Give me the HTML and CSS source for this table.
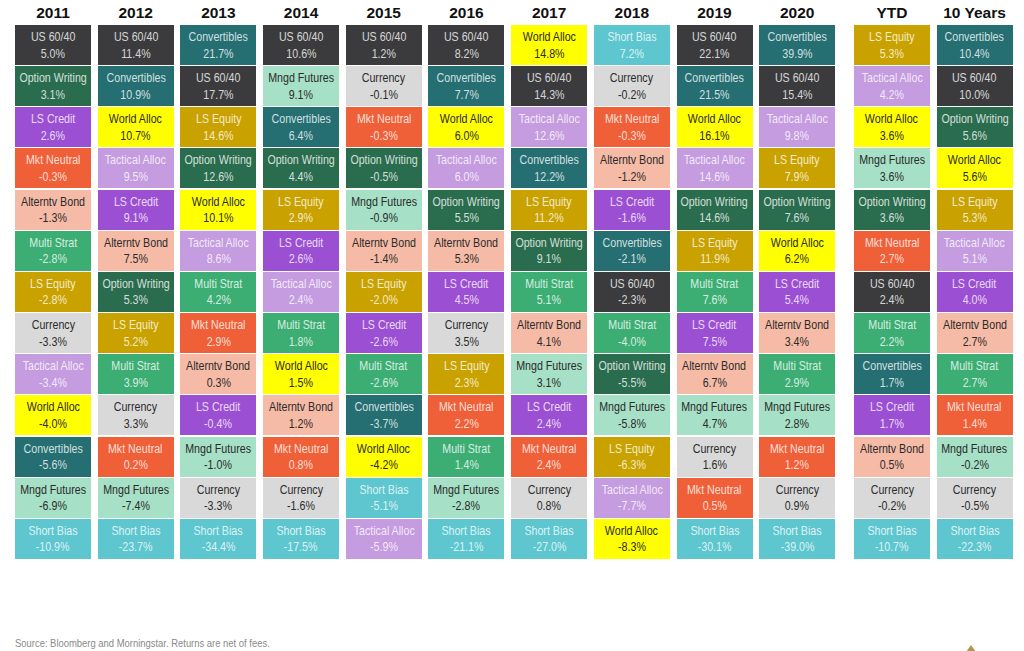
FILE: index.html
```html
<!DOCTYPE html>
<html lang="en">
<head>
<meta charset="utf-8">
<title>Asset class returns</title>
<link rel="stylesheet" href="styles.css">
</head>
<body>
<div class="page">
  <div class="chart">
    <div class="group">
      <div class="col">
        <div class="year">2011</div>
        <div class="cell c-us"><span>US 60/40</span><span>5.0%</span></div>
        <div class="cell c-ow"><span>Option Writing</span><span>3.1%</span></div>
        <div class="cell c-lsc"><span>LS Credit</span><span>2.6%</span></div>
        <div class="cell c-mn"><span>Mkt Neutral</span><span>-0.3%</span></div>
        <div class="cell c-ab"><span>Alterntv Bond</span><span>-1.3%</span></div>
        <div class="cell c-ms"><span>Multi Strat</span><span>-2.8%</span></div>
        <div class="cell c-lse"><span>LS Equity</span><span>-2.8%</span></div>
        <div class="cell c-cur"><span>Currency</span><span>-3.3%</span></div>
        <div class="cell c-ta"><span>Tactical Alloc</span><span>-3.4%</span></div>
        <div class="cell c-wa"><span>World Alloc</span><span>-4.0%</span></div>
        <div class="cell c-cv"><span>Convertibles</span><span>-5.6%</span></div>
        <div class="cell c-mf"><span>Mngd Futures</span><span>-6.9%</span></div>
        <div class="cell c-sb"><span>Short Bias</span><span>-10.9%</span></div>
      </div>
      <div class="col">
        <div class="year">2012</div>
        <div class="cell c-us"><span>US 60/40</span><span>11.4%</span></div>
        <div class="cell c-cv"><span>Convertibles</span><span>10.9%</span></div>
        <div class="cell c-wa"><span>World Alloc</span><span>10.7%</span></div>
        <div class="cell c-ta"><span>Tactical Alloc</span><span>9.5%</span></div>
        <div class="cell c-lsc"><span>LS Credit</span><span>9.1%</span></div>
        <div class="cell c-ab"><span>Alterntv Bond</span><span>7.5%</span></div>
        <div class="cell c-ow"><span>Option Writing</span><span>5.3%</span></div>
        <div class="cell c-lse"><span>LS Equity</span><span>5.2%</span></div>
        <div class="cell c-ms"><span>Multi Strat</span><span>3.9%</span></div>
        <div class="cell c-cur"><span>Currency</span><span>3.3%</span></div>
        <div class="cell c-mn"><span>Mkt Neutral</span><span>0.2%</span></div>
        <div class="cell c-mf"><span>Mngd Futures</span><span>-7.4%</span></div>
        <div class="cell c-sb"><span>Short Bias</span><span>-23.7%</span></div>
      </div>
      <div class="col">
        <div class="year">2013</div>
        <div class="cell c-cv"><span>Convertibles</span><span>21.7%</span></div>
        <div class="cell c-us"><span>US 60/40</span><span>17.7%</span></div>
        <div class="cell c-lse"><span>LS Equity</span><span>14.6%</span></div>
        <div class="cell c-ow"><span>Option Writing</span><span>12.6%</span></div>
        <div class="cell c-wa"><span>World Alloc</span><span>10.1%</span></div>
        <div class="cell c-ta"><span>Tactical Alloc</span><span>8.6%</span></div>
        <div class="cell c-ms"><span>Multi Strat</span><span>4.2%</span></div>
        <div class="cell c-mn"><span>Mkt Neutral</span><span>2.9%</span></div>
        <div class="cell c-ab"><span>Alterntv Bond</span><span>0.3%</span></div>
        <div class="cell c-lsc"><span>LS Credit</span><span>-0.4%</span></div>
        <div class="cell c-mf"><span>Mngd Futures</span><span>-1.0%</span></div>
        <div class="cell c-cur"><span>Currency</span><span>-3.3%</span></div>
        <div class="cell c-sb"><span>Short Bias</span><span>-34.4%</span></div>
      </div>
      <div class="col">
        <div class="year">2014</div>
        <div class="cell c-us"><span>US 60/40</span><span>10.6%</span></div>
        <div class="cell c-mf"><span>Mngd Futures</span><span>9.1%</span></div>
        <div class="cell c-cv"><span>Convertibles</span><span>6.4%</span></div>
        <div class="cell c-ow"><span>Option Writing</span><span>4.4%</span></div>
        <div class="cell c-lse"><span>LS Equity</span><span>2.9%</span></div>
        <div class="cell c-lsc"><span>LS Credit</span><span>2.6%</span></div>
        <div class="cell c-ta"><span>Tactical Alloc</span><span>2.4%</span></div>
        <div class="cell c-ms"><span>Multi Strat</span><span>1.8%</span></div>
        <div class="cell c-wa"><span>World Alloc</span><span>1.5%</span></div>
        <div class="cell c-ab"><span>Alterntv Bond</span><span>1.2%</span></div>
        <div class="cell c-mn"><span>Mkt Neutral</span><span>0.8%</span></div>
        <div class="cell c-cur"><span>Currency</span><span>-1.6%</span></div>
        <div class="cell c-sb"><span>Short Bias</span><span>-17.5%</span></div>
      </div>
      <div class="col">
        <div class="year">2015</div>
        <div class="cell c-us"><span>US 60/40</span><span>1.2%</span></div>
        <div class="cell c-cur"><span>Currency</span><span>-0.1%</span></div>
        <div class="cell c-mn"><span>Mkt Neutral</span><span>-0.3%</span></div>
        <div class="cell c-ow"><span>Option Writing</span><span>-0.5%</span></div>
        <div class="cell c-mf"><span>Mngd Futures</span><span>-0.9%</span></div>
        <div class="cell c-ab"><span>Alterntv Bond</span><span>-1.4%</span></div>
        <div class="cell c-lse"><span>LS Equity</span><span>-2.0%</span></div>
        <div class="cell c-lsc"><span>LS Credit</span><span>-2.6%</span></div>
        <div class="cell c-ms"><span>Multi Strat</span><span>-2.6%</span></div>
        <div class="cell c-cv"><span>Convertibles</span><span>-3.7%</span></div>
        <div class="cell c-wa"><span>World Alloc</span><span>-4.2%</span></div>
        <div class="cell c-sb"><span>Short Bias</span><span>-5.1%</span></div>
        <div class="cell c-ta"><span>Tactical Alloc</span><span>-5.9%</span></div>
      </div>
      <div class="col">
        <div class="year">2016</div>
        <div class="cell c-us"><span>US 60/40</span><span>8.2%</span></div>
        <div class="cell c-cv"><span>Convertibles</span><span>7.7%</span></div>
        <div class="cell c-wa"><span>World Alloc</span><span>6.0%</span></div>
        <div class="cell c-ta"><span>Tactical Alloc</span><span>6.0%</span></div>
        <div class="cell c-ow"><span>Option Writing</span><span>5.5%</span></div>
        <div class="cell c-ab"><span>Alterntv Bond</span><span>5.3%</span></div>
        <div class="cell c-lsc"><span>LS Credit</span><span>4.5%</span></div>
        <div class="cell c-cur"><span>Currency</span><span>3.5%</span></div>
        <div class="cell c-lse"><span>LS Equity</span><span>2.3%</span></div>
        <div class="cell c-mn"><span>Mkt Neutral</span><span>2.2%</span></div>
        <div class="cell c-ms"><span>Multi Strat</span><span>1.4%</span></div>
        <div class="cell c-mf"><span>Mngd Futures</span><span>-2.8%</span></div>
        <div class="cell c-sb"><span>Short Bias</span><span>-21.1%</span></div>
      </div>
      <div class="col">
        <div class="year">2017</div>
        <div class="cell c-wa"><span>World Alloc</span><span>14.8%</span></div>
        <div class="cell c-us"><span>US 60/40</span><span>14.3%</span></div>
        <div class="cell c-ta"><span>Tactical Alloc</span><span>12.6%</span></div>
        <div class="cell c-cv"><span>Convertibles</span><span>12.2%</span></div>
        <div class="cell c-lse"><span>LS Equity</span><span>11.2%</span></div>
        <div class="cell c-ow"><span>Option Writing</span><span>9.1%</span></div>
        <div class="cell c-ms"><span>Multi Strat</span><span>5.1%</span></div>
        <div class="cell c-ab"><span>Alterntv Bond</span><span>4.1%</span></div>
        <div class="cell c-mf"><span>Mngd Futures</span><span>3.1%</span></div>
        <div class="cell c-lsc"><span>LS Credit</span><span>2.4%</span></div>
        <div class="cell c-mn"><span>Mkt Neutral</span><span>2.4%</span></div>
        <div class="cell c-cur"><span>Currency</span><span>0.8%</span></div>
        <div class="cell c-sb"><span>Short Bias</span><span>-27.0%</span></div>
      </div>
      <div class="col">
        <div class="year">2018</div>
        <div class="cell c-sb"><span>Short Bias</span><span>7.2%</span></div>
        <div class="cell c-cur"><span>Currency</span><span>-0.2%</span></div>
        <div class="cell c-mn"><span>Mkt Neutral</span><span>-0.3%</span></div>
        <div class="cell c-ab"><span>Alterntv Bond</span><span>-1.2%</span></div>
        <div class="cell c-lsc"><span>LS Credit</span><span>-1.6%</span></div>
        <div class="cell c-cv"><span>Convertibles</span><span>-2.1%</span></div>
        <div class="cell c-us"><span>US 60/40</span><span>-2.3%</span></div>
        <div class="cell c-ms"><span>Multi Strat</span><span>-4.0%</span></div>
        <div class="cell c-ow"><span>Option Writing</span><span>-5.5%</span></div>
        <div class="cell c-mf"><span>Mngd Futures</span><span>-5.8%</span></div>
        <div class="cell c-lse"><span>LS Equity</span><span>-6.3%</span></div>
        <div class="cell c-ta"><span>Tactical Alloc</span><span>-7.7%</span></div>
        <div class="cell c-wa"><span>World Alloc</span><span>-8.3%</span></div>
      </div>
      <div class="col">
        <div class="year">2019</div>
        <div class="cell c-us"><span>US 60/40</span><span>22.1%</span></div>
        <div class="cell c-cv"><span>Convertibles</span><span>21.5%</span></div>
        <div class="cell c-wa"><span>World Alloc</span><span>16.1%</span></div>
        <div class="cell c-ta"><span>Tactical Alloc</span><span>14.6%</span></div>
        <div class="cell c-ow"><span>Option Writing</span><span>14.6%</span></div>
        <div class="cell c-lse"><span>LS Equity</span><span>11.9%</span></div>
        <div class="cell c-ms"><span>Multi Strat</span><span>7.6%</span></div>
        <div class="cell c-lsc"><span>LS Credit</span><span>7.5%</span></div>
        <div class="cell c-ab"><span>Alterntv Bond</span><span>6.7%</span></div>
        <div class="cell c-mf"><span>Mngd Futures</span><span>4.7%</span></div>
        <div class="cell c-cur"><span>Currency</span><span>1.6%</span></div>
        <div class="cell c-mn"><span>Mkt Neutral</span><span>0.5%</span></div>
        <div class="cell c-sb"><span>Short Bias</span><span>-30.1%</span></div>
      </div>
      <div class="col">
        <div class="year">2020</div>
        <div class="cell c-cv"><span>Convertibles</span><span>39.9%</span></div>
        <div class="cell c-us"><span>US 60/40</span><span>15.4%</span></div>
        <div class="cell c-ta"><span>Tactical Alloc</span><span>9.8%</span></div>
        <div class="cell c-lse"><span>LS Equity</span><span>7.9%</span></div>
        <div class="cell c-ow"><span>Option Writing</span><span>7.6%</span></div>
        <div class="cell c-wa"><span>World Alloc</span><span>6.2%</span></div>
        <div class="cell c-lsc"><span>LS Credit</span><span>5.4%</span></div>
        <div class="cell c-ab"><span>Alterntv Bond</span><span>3.4%</span></div>
        <div class="cell c-ms"><span>Multi Strat</span><span>2.9%</span></div>
        <div class="cell c-mf"><span>Mngd Futures</span><span>2.8%</span></div>
        <div class="cell c-mn"><span>Mkt Neutral</span><span>1.2%</span></div>
        <div class="cell c-cur"><span>Currency</span><span>0.9%</span></div>
        <div class="cell c-sb"><span>Short Bias</span><span>-39.0%</span></div>
      </div>
    </div>
    <div class="group group-summary">
      <div class="col">
        <div class="year">YTD</div>
        <div class="cell c-lse"><span>LS Equity</span><span>5.3%</span></div>
        <div class="cell c-ta"><span>Tactical Alloc</span><span>4.2%</span></div>
        <div class="cell c-wa"><span>World Alloc</span><span>3.6%</span></div>
        <div class="cell c-mf"><span>Mngd Futures</span><span>3.6%</span></div>
        <div class="cell c-ow"><span>Option Writing</span><span>3.6%</span></div>
        <div class="cell c-mn"><span>Mkt Neutral</span><span>2.7%</span></div>
        <div class="cell c-us"><span>US 60/40</span><span>2.4%</span></div>
        <div class="cell c-ms"><span>Multi Strat</span><span>2.2%</span></div>
        <div class="cell c-cv"><span>Convertibles</span><span>1.7%</span></div>
        <div class="cell c-lsc"><span>LS Credit</span><span>1.7%</span></div>
        <div class="cell c-ab"><span>Alterntv Bond</span><span>0.5%</span></div>
        <div class="cell c-cur"><span>Currency</span><span>-0.2%</span></div>
        <div class="cell c-sb"><span>Short Bias</span><span>-10.7%</span></div>
      </div>
      <div class="col">
        <div class="year">10 Years</div>
        <div class="cell c-cv"><span>Convertibles</span><span>10.4%</span></div>
        <div class="cell c-us"><span>US 60/40</span><span>10.0%</span></div>
        <div class="cell c-ow"><span>Option Writing</span><span>5.6%</span></div>
        <div class="cell c-wa"><span>World Alloc</span><span>5.6%</span></div>
        <div class="cell c-lse"><span>LS Equity</span><span>5.3%</span></div>
        <div class="cell c-ta"><span>Tactical Alloc</span><span>5.1%</span></div>
        <div class="cell c-lsc"><span>LS Credit</span><span>4.0%</span></div>
        <div class="cell c-ab"><span>Alterntv Bond</span><span>2.7%</span></div>
        <div class="cell c-ms"><span>Multi Strat</span><span>2.7%</span></div>
        <div class="cell c-mn"><span>Mkt Neutral</span><span>1.4%</span></div>
        <div class="cell c-mf"><span>Mngd Futures</span><span>-0.2%</span></div>
        <div class="cell c-cur"><span>Currency</span><span>-0.5%</span></div>
        <div class="cell c-sb"><span>Short Bias</span><span>-22.3%</span></div>
      </div>
    </div>
  </div>
  <p class="source">Source: Bloomberg and Morningstar. Returns are net of fees.</p>
  <div class="logo-mark"></div>
</div>
</body>
</html>
```
FILE: styles.css
```css
html, body {
  margin: 0;
  padding: 0;
  background: #ffffff;
}

.page {
  position: relative;
  width: 1024px;
  height: 651px;
  overflow: hidden;
}

.chart {
  display: flex;
  padding-left: 15px;
}

.group {
  display: flex;
  gap: 6.7px;
}

.group-summary {
  margin-left: 18.7px;
}

.col {
  width: 76px;
  display: flex;
  flex-direction: column;
  gap: 1.17px;
}

.year {
  height: 25px;
  line-height: 25px;
  text-align: center;
  font-family: "Liberation Sans", Arial, sans-serif;
  font-weight: bold;
  font-size: 15.5px;
  color: #111111;
}

.col .year + .cell {
  margin-top: -1.17px;
}

.cell {
  height: 40px;
  display: flex;
  flex-direction: column;
  align-items: center;
  justify-content: center;
  padding-top: 1px;
  box-sizing: border-box;
  font-family: "Liberation Sans", Arial, sans-serif;
  font-size: 13px;
  line-height: 16.5px;
  color: rgba(255, 255, 255, 0.8);
  white-space: nowrap;
}

.cell span {
  display: inline-block;
  transform: scaleX(0.82);
}

.c-us  { background: #3b3b3d; }
.c-ow  { background: #2a6c4e; }
.c-lsc { background: #9b4fd3; }
.c-mn  { background: #f06038; }
.c-ab  { background: #f5bba6; color: #2b2b2b; }
.c-ms  { background: #3cae74; }
.c-lse { background: #c9a200; }
.c-cur { background: #d9d9d9; color: #2b2b2b; }
.c-ta  { background: #c59ce0; }
.c-wa  { background: #ffff00; color: #2b2b2b; }
.c-cv  { background: #256e72; }
.c-mf  { background: #a6e0c6; color: #2b2b2b; }
.c-sb  { background: #5dc6cf; }

.source {
  margin: 0;
  position: absolute;
  left: 15px;
  top: 637px;
  font-family: "Liberation Sans", Arial, sans-serif;
  font-size: 11.5px;
  color: #8a8a8a;
  transform: scaleX(0.82);
  transform-origin: left center;
  white-space: nowrap;
}

.logo-mark {
  position: absolute;
  left: 966px;
  top: 645px;
  width: 0;
  height: 0;
  border-left: 5px solid transparent;
  border-right: 5px solid transparent;
  border-bottom: 7px solid #b8934a;
}
```
